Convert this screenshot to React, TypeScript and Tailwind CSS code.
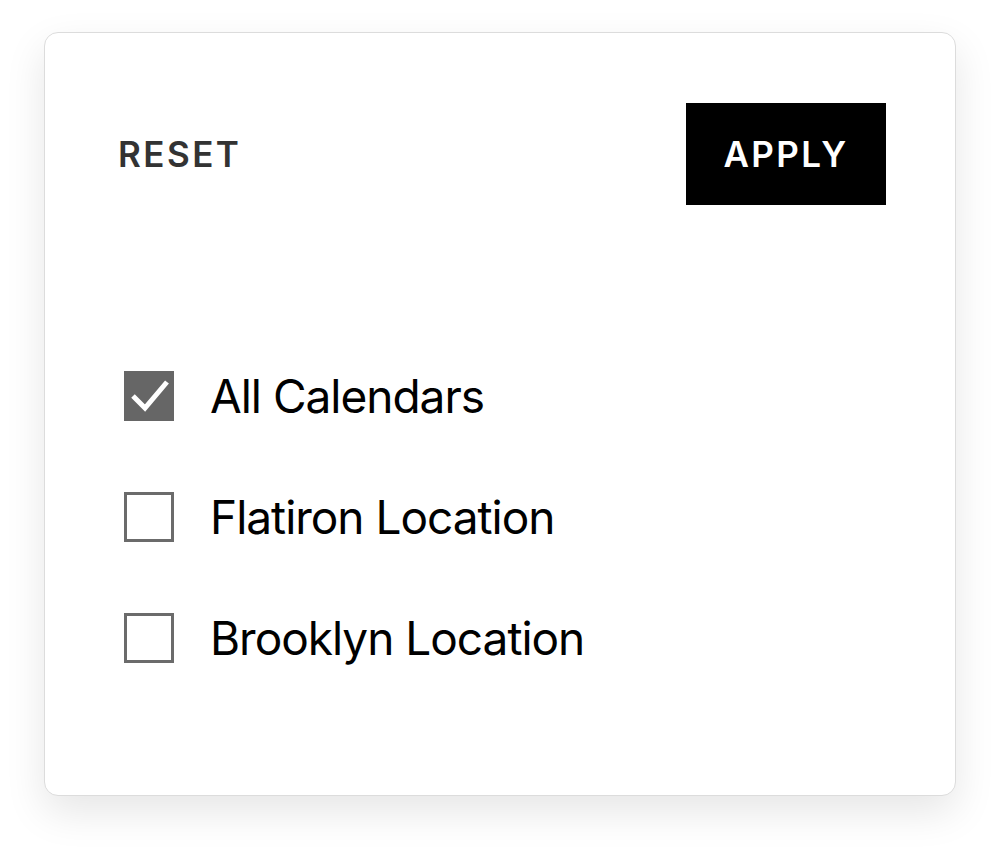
import { useState } from "react";

const locations = ["All Calendars", "Flatiron Location", "Brooklyn Location"];

function CheckBox({ checked }: { checked: boolean }) {
    return checked ? (
        <span className="relative h-[50px] w-[50px] shrink-0 bg-[#666666]">
            <svg className="absolute inset-0" width="50" height="50" viewBox="0 0 50 50" fill="none">
                <path d="M9 25 L21 37 L43 11" stroke="white" strokeWidth="5" strokeLinecap="butt" strokeLinejoin="miter" />
            </svg>
        </span>
    ) : (
        <span className="h-[50px] w-[50px] shrink-0 border-[3px] border-[#6b6b6b] bg-white" />
    );
}

export default function App() {
    const [selected, setSelected] = useState<string[]>(["All Calendars"]);

    const toggle = (name: string) => {
        setSelected(prev => prev.includes(name) ? prev.filter(n => n !== name) : [...prev, name]);
    }

    return (
        <div className="min-h-[851px] w-full bg-white pt-[32px] pl-[44px]" style={{ fontFamily: "Inter, 'Noto Sans', sans-serif" }}>
            <div className="flex h-[764px] w-[912px] flex-col rounded-[14px] border border-[#dcdcdc] bg-white pt-[70px] pr-[69px] pl-[73px] shadow-[0_16px_40px_rgba(0,0,0,0.1)]">
                <div className="flex items-center justify-between">
                    <button className="text-[35px] font-semibold tracking-[0.07em] text-[#333333]">RESET</button>
                    <button className="flex h-[102px] w-[200px] items-center justify-center bg-black text-[35px] font-semibold tracking-[0.07em] text-white">
                        APPLY
                    </button>
                </div>
                <div className="mt-[166px] flex flex-col gap-[71px] pl-[6px]">
                    {locations.map(name => (
                        <label key={name} className="flex h-[50px] cursor-pointer items-center gap-[36px]" onClick={() => toggle(name)}>
                            <CheckBox checked={selected.includes(name)} />
                            <span className="text-[46px] leading-none tracking-[-0.022em] text-black">{name}</span>
                        </label>
                    ))}
                </div>
            </div>
        </div>
    )
}
